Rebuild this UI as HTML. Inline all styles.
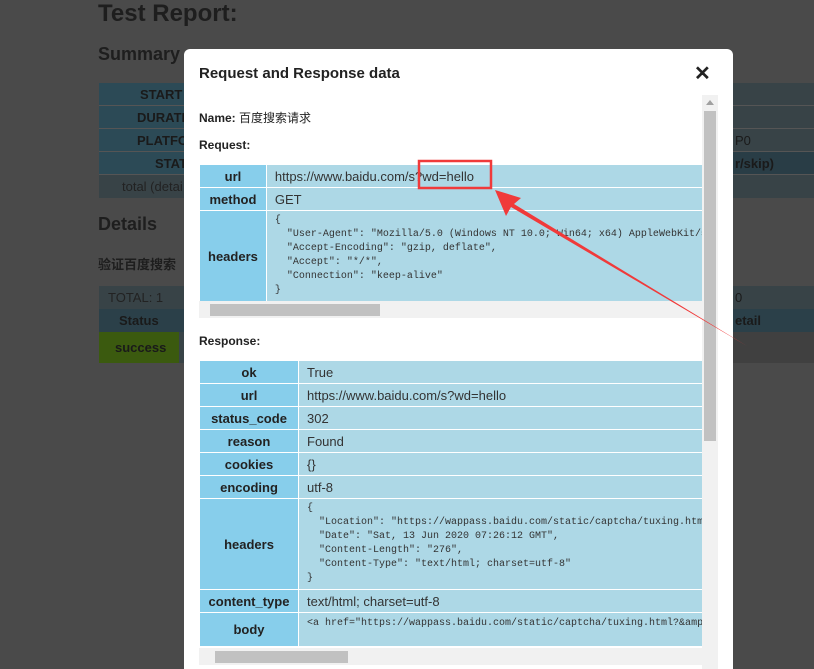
<!DOCTYPE html>
<html style="background:#4a4a4a;overflow:hidden;width:814px;height:669px"><head><meta charset="utf-8"><style>
*{margin:0;padding:0;box-sizing:border-box}
body{width:814px;height:669px;overflow:hidden;background:#4a4a4a;font-family:"Liberation Sans","Noto Sans CJK SC",sans-serif;position:relative}
.a{position:absolute}
.bgt{color:#1e1e1e;font-weight:bold}
.c{position:absolute;font-size:13px;display:flex;align-items:center;justify-content:center;color:#1a1a1a}
#modal{position:absolute;left:184px;top:49px;width:549px;height:620px;background:#fff;border-radius:6px 6px 0 0;overflow:hidden}
table{border-collapse:collapse;font-size:13px;color:#333}
td{border:1px solid #fff;height:23px;padding:0 8px;background:#add8e6;white-space:nowrap}
td.k{background:#87ceeb;font-weight:bold;text-align:center;color:#222}
pre{font-family:"Liberation Mono","Noto Sans CJK SC",monospace;font-size:10px;line-height:14px;color:#333}
.hs{position:absolute;height:17px;background:#f1f1f1}
.hs i{position:absolute;top:3px;height:12px;background:#c1c1c1}
</style></head><body>
<div class="a bgt" style="left:98px;top:0;font-size:24px">Test Report:</div>
<div class="a bgt" style="left:98px;top:44px;font-size:18px">Summary</div>
<div class="a" style="left:99px;top:83px;width:715px;height:115px;background:#384347"></div>
<div class="a" style="left:99px;top:83px;width:85px;height:92px;background:#2c4a56"></div>
<div class="a" style="left:733px;top:152px;width:81px;height:23px;background:#293d46"></div>
<div class="a" style="left:99px;top:105px;width:715px;height:1px;background:#555"></div>
<div class="a" style="left:99px;top:128px;width:715px;height:1px;background:#555"></div>
<div class="a" style="left:99px;top:151px;width:715px;height:1px;background:#555"></div>
<div class="a" style="left:99px;top:174px;width:715px;height:1px;background:#555"></div>
<div class="c" style="left:140px;top:83px;height:23px;font-weight:bold">START</div>
<div class="c" style="left:137px;top:106px;height:23px;font-weight:bold">DURATI</div>
<div class="c" style="left:137px;top:129px;height:23px;font-weight:bold">PLATFO</div>
<div class="c" style="left:155px;top:152px;height:23px;font-weight:bold">STAT</div>
<div class="c" style="left:122px;top:175px;height:23px;color:#222">total (detai</div>
<div class="c" style="left:735px;top:129px;height:23px">P0</div>
<div class="c" style="left:735px;top:152px;height:23px;font-weight:bold">r/skip)</div>
<div class="a bgt" style="left:98px;top:214px;font-size:18px">Details</div>
<div class="a bgt" style="left:98px;top:254px;font-size:13px">验证百度搜索</div>
<div class="a" style="left:99px;top:286px;width:715px;height:77px;background:#384347"></div>
<div class="a" style="left:99px;top:309px;width:715px;height:23px;background:#2b4049"></div>
<div class="a" style="left:99px;top:332px;width:80px;height:31px;background:#3b5a0f"></div>
<div class="a" style="left:733px;top:332px;width:81px;height:31px;background:#404040"></div>
<div class="c" style="left:108px;top:286px;height:23px;color:#222">TOTAL: 1</div>
<div class="c" style="left:119px;top:309px;height:23px;font-weight:bold">Status</div>
<div class="c" style="left:115px;top:332px;height:31px;font-weight:bold">success</div>
<div class="c" style="left:735px;top:286px;height:23px">0</div>
<div class="c" style="left:735px;top:309px;height:23px;font-weight:bold">etail</div>

<div id="modal">
<div class="a" style="left:15px;top:16px;font-size:15px;font-weight:bold;color:#222">Request and Response data</div>
<div class="a" style="left:510px;top:12px;font-size:20px;font-weight:bold;color:#222">✕</div>
<div class="a" style="left:15px;top:46px;width:519px;height:574px;overflow:hidden">
 <div class="a" style="left:503px;top:0;width:16px;height:600px;background:#f1f1f1"></div>
 <div class="a" style="left:505px;top:16px;width:12px;height:330px;background:#c1c1c1"></div>
 <div class="a" style="left:507px;top:5px;width:0;height:0;border:4px solid transparent;border-bottom:5px solid #a0a0a0;border-top:0"></div>
 <div class="a" style="left:0;top:14px;font-size:12px;font-weight:bold;color:#222">Name: <span style="font-weight:normal">百度搜索请求</span></div>
 <div class="a" style="left:0;top:43px;font-size:12px;font-weight:bold;color:#222">Request:</div>
 <div class="a" style="left:0;top:69px;width:503px;overflow:hidden">
  <table style="width:520px"><tr><td class="k" style="width:67px">url</td><td>https://www.baidu.com/s?wd=hello</td></tr>
  <tr><td class="k">method</td><td>GET</td></tr>
  <tr><td class="k" style="height:91px">headers</td><td><pre>{
  "User-Agent": "Mozilla/5.0 (Windows NT 10.0; Win64; x64) AppleWebKit/537
  "Accept-Encoding": "gzip, deflate",
  "Accept": "*/*",
  "Connection": "keep-alive"
}</pre></td></tr></table>
 </div>
 <div class="hs" style="left:0;top:206px;width:503px"><i style="left:11px;width:170px"></i></div>
 <div class="a" style="left:0;top:239px;font-size:12px;font-weight:bold;color:#222">Response:</div>
 <div class="a" style="left:0;top:265px;width:503px;overflow:hidden">
  <table style="width:540px"><tr><td class="k" style="width:99px">ok</td><td>True</td></tr>
  <tr><td class="k">url</td><td>https://www.baidu.com/s?wd=hello</td></tr>
  <tr><td class="k">status_code</td><td>302</td></tr>
  <tr><td class="k">reason</td><td>Found</td></tr>
  <tr><td class="k">cookies</td><td>{}</td></tr>
  <tr><td class="k">encoding</td><td>utf-8</td></tr>
  <tr><td class="k" style="height:91px">headers</td><td><pre>{
  "Location": "https://wappass.baidu.com/static/captcha/tuxing.html",
  "Date": "Sat, 13 Jun 2020 07:26:12 GMT",
  "Content-Length": "276",
  "Content-Type": "text/html; charset=utf-8"
}</pre></td></tr>
  <tr><td class="k">content_type</td><td>text/html; charset=utf-8</td></tr>
  <tr><td class="k" style="height:34px">body</td><td style="vertical-align:top;padding-top:4px"><pre>&lt;a href="https://wappass.baidu.com/static/captcha/tuxing.html?&amp;amp</pre></td></tr></table>
 </div>
 <div class="hs" style="left:0;top:553px;width:503px"><i style="left:16px;width:133px"></i></div>
</div>
</div>
<svg class="a" style="left:0;top:0" width="814" height="669">
<rect x="419" y="161" width="72" height="27" fill="none" stroke="#f03a3a" stroke-width="2.5"/>
<polygon points="495,190 521,198 514,204 747,346 511,207 506,216" fill="#f03a3a"/>
</svg>
</body></html>
